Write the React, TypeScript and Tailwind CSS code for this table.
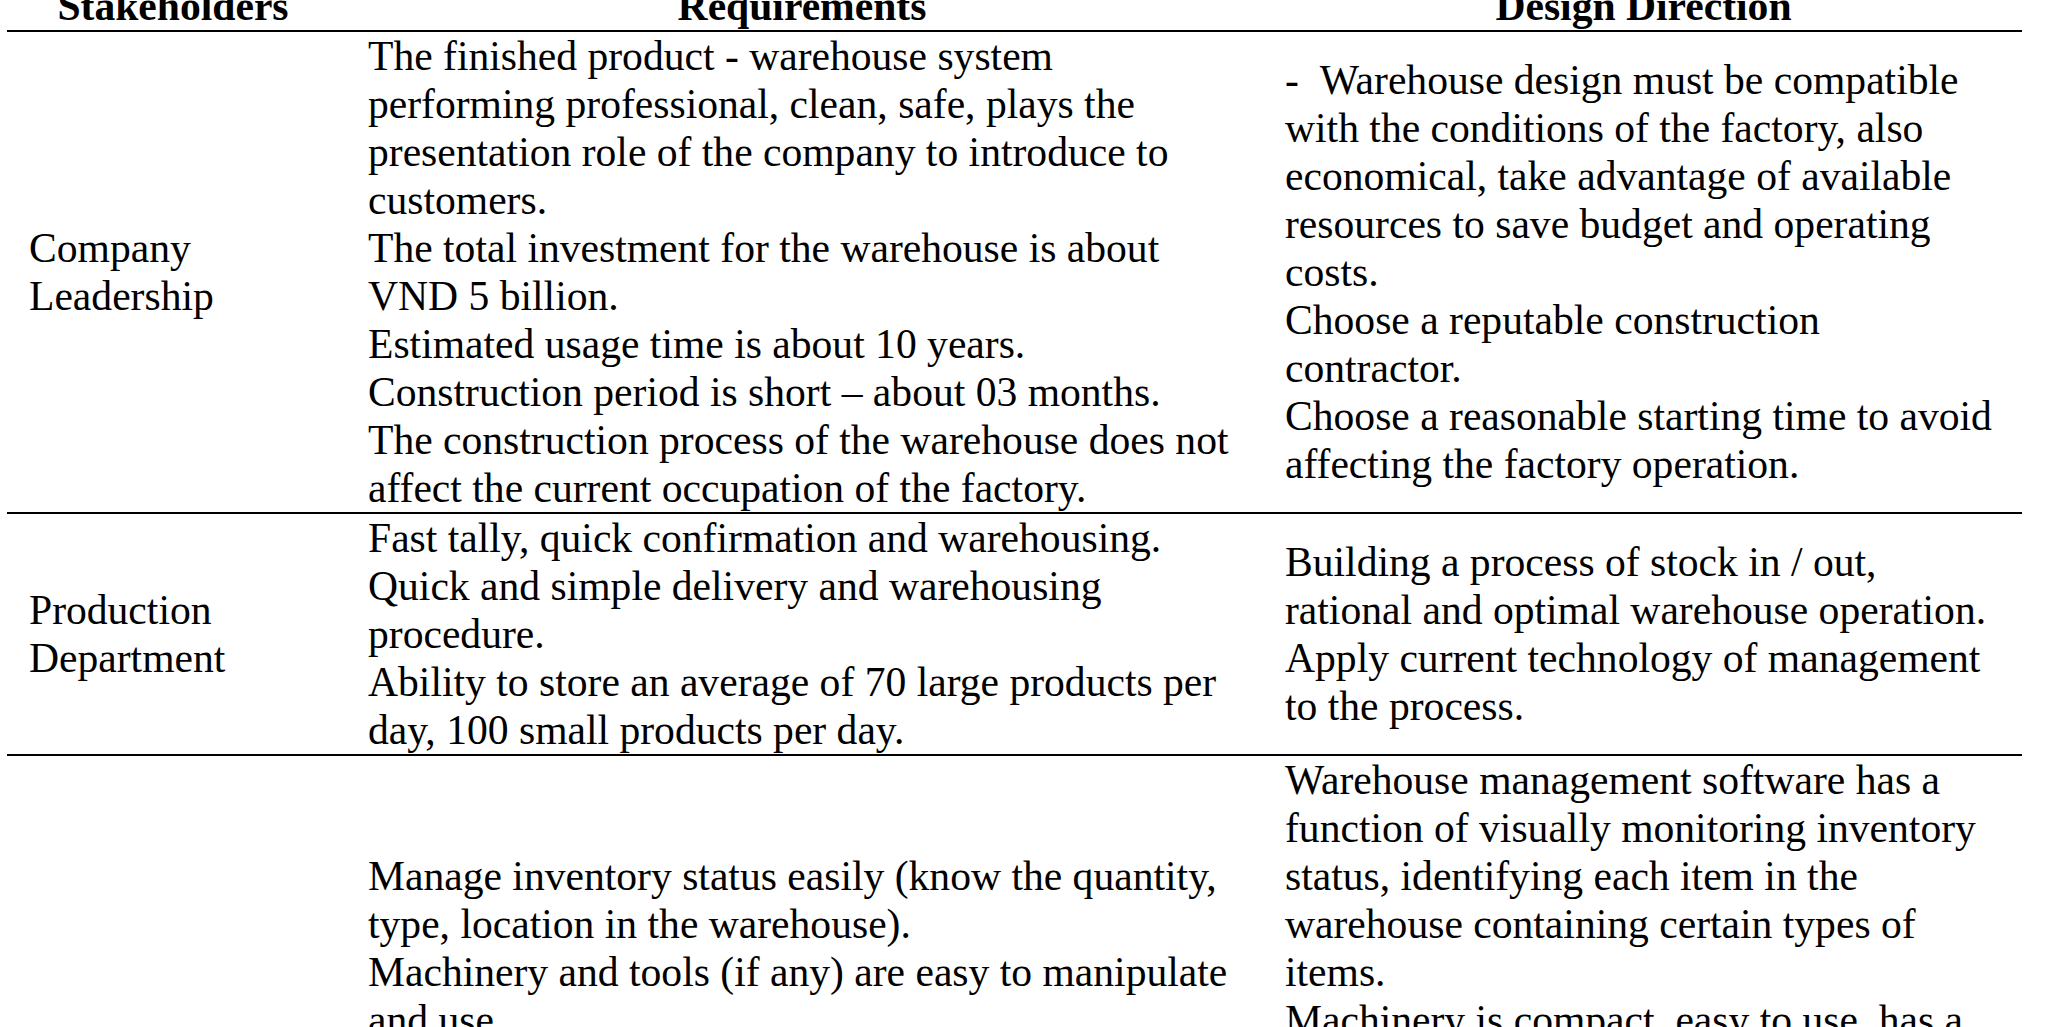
import React from "react";

type Row = {
  stakeholder: string[];
  requirements: string[];
  direction: string[];
};

const rows: Row[] = [
  {
    stakeholder: ["Company", "Leadership"],
    requirements: [
      "The finished product - warehouse system",
      "performing professional, clean, safe, plays the",
      "presentation role of the company to introduce to",
      "customers.",
      "The total investment for the warehouse is about",
      "VND 5 billion.",
      "Estimated usage time is about 10 years.",
      "Construction period is short \u2013 about 03 months.",
      "The construction process of the warehouse does not",
      "affect the current occupation of the factory.",
    ],
    direction: [
      "-\u00a0\u00a0Warehouse design must be compatible",
      "with the conditions of the factory, also",
      "economical, take advantage of available",
      "resources to save budget and operating",
      "costs.",
      "Choose a reputable construction",
      "contractor.",
      "Choose a reasonable starting time to avoid",
      "affecting the factory operation.",
    ],
  },
  {
    stakeholder: ["Production", "Department"],
    requirements: [
      "Fast tally, quick confirmation and warehousing.",
      "Quick and simple delivery and warehousing",
      "procedure.",
      "Ability to store an average of 70 large products per",
      "day, 100 small products per day.",
    ],
    direction: [
      "Building a process of stock in / out,",
      "rational and optimal warehouse operation.",
      "Apply current technology of management",
      "to the process.",
    ],
  },
  {
    stakeholder: ["Warehouse", "Department"],
    requirements: [
      "Manage inventory status easily (know the quantity,",
      "type, location in the warehouse).",
      "Machinery and tools (if any) are easy to manipulate",
      "and use.",
      "Safe working environment, reasonable layout for",
      "moving and handling goods.",
      "Easy to find, pick and check the goods when",
      "needed.",
      "Clean, tidy and well-ventilated warehouse.",
    ],
    direction: [
      "Warehouse management software has a",
      "function of visually monitoring inventory",
      "status, identifying each item in the",
      "warehouse containing certain types of",
      "items.",
      "Machinery is compact, easy to use, has a",
      "high level of safety and suits the",
      "characteristics of the goods.",
      "Arrange goods scientifically by type and",
      "size to make picking and checking",
      "convenient.",
      "Train staff to operate equipment and",
      "software correctly.",
    ],
  },
];

const Lines: React.FC<{ lines: string[] }> = ({ lines }) => (
  <div>
    {lines.map((l, i) => (
      <div key={i} className="whitespace-nowrap">{l}</div>
    ))}
  </div>
);

const App: React.FC = () => {
  return (
    <div className="h-[1027px] overflow-hidden bg-white text-black font-['Liberation_Serif','Times_New_Roman',serif] text-[41.6px] leading-[48px]">
      <div className="-mt-[18px] ml-[7px] w-[2015px]">
        {/* header */}
        <div className="grid grid-cols-[332px_926px_757px] border-b-2 border-black font-bold">
          <div className="text-center">Stakeholders</div>
          <div className="text-center">Requirements</div>
          <div className="text-center">Design Direction</div>
        </div>

        {rows.map((r, i) => (
          <div
            key={i}
            className="grid grid-cols-[332px_926px_757px] items-center border-b-2 border-black"
          >
            <div className="pl-[22px]"><Lines lines={r.stakeholder} /></div>
            <div className="pl-[29px]"><Lines lines={r.requirements} /></div>
            <div className="pl-[20px]"><Lines lines={r.direction} /></div>
          </div>
        ))}
      </div>
    </div>
  );
};

export default App;
